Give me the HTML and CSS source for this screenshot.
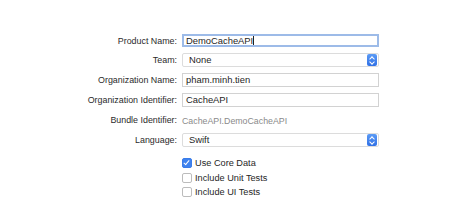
FILE: index.html
```html
<!DOCTYPE html>
<html lang="en">
<head>
    <meta charset="UTF-8">
    <title>Choose options for your new project</title>
    <link rel="stylesheet" href="styles.css">
</head>
<body>
    <div class="form">
        <label class="label">Product Name:</label>
        <div class="field focused">DemoCacheAPI<span class="caret"></span></div>

        <label class="label">Team:</label>
        <div class="popup">None<span class="stepper"></span></div>

        <label class="label">Organization Name:</label>
        <div class="field">pham.minh.tien</div>

        <label class="label">Organization Identifier:</label>
        <div class="field">CacheAPI</div>

        <label class="label">Bundle Identifier:</label>
        <div class="value">CacheAPI.DemoCacheAPI</div>

        <label class="label">Language:</label>
        <div class="popup">Swift<span class="stepper"></span></div>

        <!-- Options -->
        <div></div>
        <div class="checks">
            <div class="check"><span class="box on"></span>Use Core Data</div>
            <div class="check"><span class="box"></span>Include Unit Tests</div>
            <div class="check"><span class="box"></span>Include UI Tests</div>
        </div>
    </div>
</body>
</html>
```

FILE: styles.css
```css
/* General styling */
body {
    margin: 0;
    background-color: #fff;
    font-family: "Liberation Sans", Arial, sans-serif;
    color: #262626;
}

.form {
    display: grid;
    grid-template-columns: 177px 197px;
    column-gap: 5px;
    row-gap: 6px;
    align-items: center;
    padding-top: 34px;
}

.label {
    text-align: right;
    font-size: 8.9px;
    color: #2b2b2b;
}

.field, .popup, .value {
    height: 14px;
    box-sizing: border-box;
    font-size: 9.4px;
    line-height: 12px;
}

.field {
    border: 1px solid #d2d2d2;
    padding: 0 3px;
    background-color: #fff;
    color: #1e1e1e;
}

.field.focused {
    height: 13px;
    line-height: 10px;
    border: 2px solid #9dbbe8;
    padding: 0 2px;
}

.caret {
    display: inline-block;
    width: 1px;
    height: 9px;
    background-color: #222;
    vertical-align: -1px;
}

.popup {
    position: relative;
    border: 1px solid #dcdcdc;
    border-radius: 2px;
    padding: 0 6px;
    background-color: #fff;
}

.stepper {
    position: absolute;
    right: 1px;
    top: 0;
    width: 10px;
    height: 12px;
    border-radius: 2px;
    background: linear-gradient(#5c9bf5, #2f70e6);
}

.stepper::before, .stepper::after {
    content: "";
    position: absolute;
    left: 3px;
    width: 3px;
    height: 3px;
    border-left: 1px solid #fff;
    border-top: 1px solid #fff;
}

.stepper::before {
    top: 2.5px;
    transform: rotate(45deg);
}

.stepper::after {
    top: 5.5px;
    transform: rotate(225deg);
}

.value {
    color: #8a8a8a;
    font-size: 8.8px;
    padding-left: 0;
    padding-top: 2px;
}

.checks {
    margin-top: 3px;
}

.check {
    display: flex;
    align-items: center;
    height: 14.5px;
    font-size: 9.2px;
    color: #262626;
}

.box {
    width: 8px;
    height: 8px;
    border: 1px solid #bcbcbc;
    border-radius: 2px;
    background-color: #fff;
    margin-right: 3px;
    position: relative;
}

.box.on {
    border-color: #3a7ce9;
    background-color: #3f82ee;
}

.box.on::after {
    content: "";
    position: absolute;
    left: 2px;
    top: 0;
    width: 2px;
    height: 5px;
    border-right: 1.5px solid #fff;
    border-bottom: 1.5px solid #fff;
    transform: rotate(40deg);
}
```
